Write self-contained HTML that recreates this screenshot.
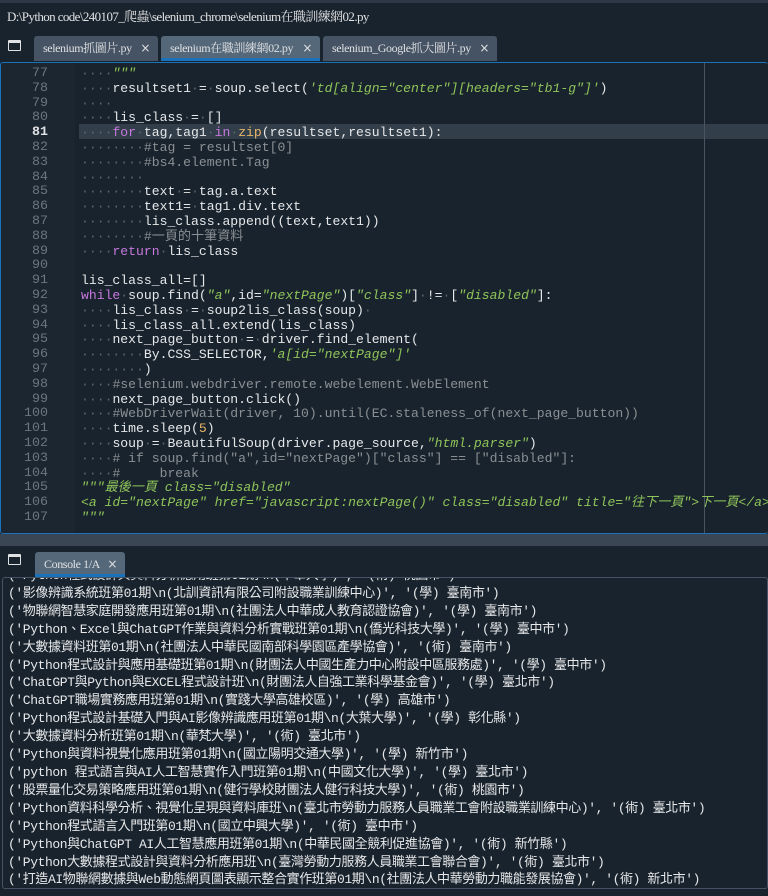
<!DOCTYPE html>
<html><head><meta charset="utf-8"><style>
*{margin:0;padding:0;box-sizing:border-box}
body{width:768px;height:896px;background:#19232d;overflow:hidden;position:relative;font-family:"Liberation Mono","Noto Sans CJK TC",monospace}
.title{position:absolute;left:0;top:0;width:768px;height:31px;background:#19232d;border-top:3px solid #2c3845;color:#e0e1e3;font-family:"Liberation Serif","Noto Serif CJK SC",serif;font-size:13px;line-height:28px;padding-left:7px;letter-spacing:-0.6px}
.tabs{position:absolute;top:36px;left:0;width:768px;height:25px}
.tab{position:absolute;top:0;height:25px;background:#455364;color:#e0e1e3;font-family:"Liberation Serif","Noto Serif CJK SC",serif;font-size:12px;line-height:24px;padding-left:9px;border-radius:3px 3px 0 0;letter-spacing:-0.4px}
.tab.act{background:#54687a;border-bottom:3px solid #1a72bb}
.tab b{position:absolute;right:8px;top:0;font-weight:normal;font-family:"DejaVu Sans",sans-serif;font-size:12px}
.icon{position:absolute;width:13px;height:11px;border:1.5px solid #dfe1e2;border-top-width:3px;border-radius:1px}
.editor{position:absolute;left:0;top:62px;width:768px;height:472px;border:1.5px solid #1a72bb;border-right:none;border-radius:3px;background:#19232d;overflow:hidden}
.gut{position:absolute;left:0;top:0;width:74px;height:100%;background:#1c2631}
.vline{position:absolute;left:703px;top:0;width:1px;height:100%;background:#4a5460}
.cur{position:absolute;left:78px;top:61px;width:690px;height:15px;background:#323e49}
.ln{position:absolute;left:0;width:47px;text-align:right;color:#6b7680;font-size:13.33px;line-height:14.8px}
.code{position:absolute;left:80px;top:4px;white-space:pre;font-size:13.1px;line-height:14.8px;color:#e6e8ea}
.d{color:#5b6570}.k{color:#c678dd}.b{color:#e5b567}.s{color:#8fc45a;font-style:italic}.c{color:#8a8f94}.n{color:#e5b567}
.split{position:absolute;left:0;top:534px;width:768px;height:12px;background:#3a4653}
.console{position:absolute;left:2px;top:577px;width:766px;height:312px;border:1px solid #455364;border-radius:3px;overflow:hidden;background:#19232d}
.cl{position:absolute;left:5px;white-space:pre;font-size:13px;letter-spacing:-0.4px;line-height:17.9px;color:#e6e8ea}
</style></head><body>
<div class="title">D:\Python code\240107_爬蟲\selenium_chrome\selenium在職訓練網02.py</div>
<div class="icon" style="left:8px;top:40px"></div>
<div class="tabs">
<div class="tab" style="left:34px;width:124px">selenium抓圖片.py<b>×</b></div>
<div class="tab act" style="left:161px;width:159px">selenium在職訓練網02.py<b>×</b></div>
<div class="tab" style="left:323px;width:174px">selenium_Google抓大圖片.py<b>×</b></div>
</div>
<div class="editor">
<div class="gut"></div>
<div class="cur"></div>
<div class="vline"></div>
<div class="ln" style="top:4px">77<br>78<br>79<br>80<br><span style="color:#e0e1e3;font-weight:bold">81</span><br>82<br>83<br>84<br>85<br>86<br>87<br>88<br>89<br>90<br>91<br>92<br>93<br>94<br>95<br>96<br>97<br>98<br>99<br>100<br>101<br>102<br>103<br>104<br>105<br>106<br>107</div>
<div class="code"><span class="d">····</span><span class="s">"""</span>
<span class="d">····</span>resultset1<span class="d">·</span>=<span class="d">·</span>soup.select(<span class="s">'td[align="center"][headers="tb1-g"]'</span>)
<span class="d">····</span>
<span class="d">····</span>lis_class<span class="d">·</span>=<span class="d">·</span>[]
<span class="d">····</span><span class="k">for</span><span class="d">·</span>tag,tag1<span class="d">·</span><span class="k">in</span><span class="d">·</span><span class="b">zip</span>(resultset,resultset1):
<span class="d">········</span><span class="c">#tag = resultset[0]</span>
<span class="d">········</span><span class="c">#bs4.element.Tag</span>
<span class="d">········</span>
<span class="d">········</span>text<span class="d">·</span>=<span class="d">·</span>tag.a.text
<span class="d">········</span>text1=<span class="d">·</span>tag1.div.text
<span class="d">········</span>lis_class.append((text,text1))
<span class="d">········</span><span class="c">#一頁的十筆資料</span>
<span class="d">····</span><span class="k">return</span><span class="d">·</span>lis_class

lis_class_all=[]
<span class="k">while</span><span class="d">·</span>soup.find(<span class="s">"a"</span>,id=<span class="s">"nextPage"</span>)[<span class="s">"class"</span>]<span class="d">·</span>!=<span class="d">·</span>[<span class="s">"disabled"</span>]:
<span class="d">····</span>lis_class<span class="d">·</span>=<span class="d">·</span>soup2lis_class(soup)<span class="d">·</span>
<span class="d">····</span>lis_class_all.extend(lis_class)
<span class="d">····</span>next_page_button<span class="d">·</span>=<span class="d">·</span>driver.find_element(
<span class="d">········</span>By.CSS_SELECTOR,<span class="s">'a[id="nextPage"]'</span>
<span class="d">········</span>)
<span class="d">····</span><span class="c">#selenium.webdriver.remote.webelement.WebElement</span>
<span class="d">····</span>next_page_button.click()
<span class="d">····</span><span class="c">#WebDriverWait(driver, 10).until(EC.staleness_of(next_page_button))</span>
<span class="d">····</span>time.sleep(<span class="n">5</span>)
<span class="d">····</span>soup<span class="d">·</span>=<span class="d">·</span>BeautifulSoup(driver.page_source,<span class="s">"html.parser"</span>)
<span class="d">····</span><span class="c"># if soup.find("a",id="nextPage")["class"] == ["disabled"]:</span>
<span class="d">····</span><span class="c">#     break</span>
<span class="s">"""最後一頁 class="disabled"</span>
<span class="s">&lt;a id="nextPage" href="javascript:nextPage()" class="disabled" title="往下一頁"&gt;下一頁&lt;/a&gt;</span>
<span class="s">"""</span></div>
</div>
<div class="split"></div>
<div class="icon" style="left:8px;top:554px"></div>
<div class="tab act" style="left:35px;top:552px;width:90px;position:absolute">Console 1/A<b>×</b></div>
<div class="console">
<div class="cl" style="top:-11px">('Python程式設計與資料分析應用班第01期\n(中華大學)', '(術) 桃園市')
('影像辨識系統班第01期\n(北訓資訊有限公司附設職業訓練中心)', '(學) 臺南市')
('物聯網智慧家庭開發應用班第01期\n(社團法人中華成人教育認證協會)', '(學) 臺南市')
('Python、Excel與ChatGPT作業與資料分析實戰班第01期\n(僑光科技大學)', '(學) 臺中市')
('大數據資料班第01期\n(社團法人中華民國南部科學園區產學協會)', '(術) 臺南市')
('Python程式設計與應用基礎班第01期\n(財團法人中國生產力中心附設中區服務處)', '(學) 臺中市')
('ChatGPT與Python與EXCEL程式設計班\n(財團法人自強工業科學基金會)', '(學) 臺北市')
('ChatGPT職場實務應用班第01期\n(實踐大學高雄校區)', '(學) 高雄市')
('Python程式設計基礎入門與AI影像辨識應用班第01期\n(大葉大學)', '(學) 彰化縣')
('大數據資料分析班第01期\n(華梵大學)', '(術) 臺北市')
('Python與資料視覺化應用班第01期\n(國立陽明交通大學)', '(學) 新竹市')
('python 程式語言與AI人工智慧實作入門班第01期\n(中國文化大學)', '(學) 臺北市')
('股票量化交易策略應用班第01期\n(健行學校財團法人健行科技大學)', '(術) 桃園市')
('Python資料科學分析、視覺化呈現與資料庫班\n(臺北市勞動力服務人員職業工會附設職業訓練中心)', '(術) 臺北市')
('Python程式語言入門班第01期\n(國立中興大學)', '(術) 臺中市')
('Python與ChatGPT AI人工智慧應用班第01期\n(中華民國全競利促進協會)', '(術) 新竹縣')
('Python大數據程式設計與資料分析應用班\n(臺灣勞動力服務人員職業工會聯合會)', '(術) 臺北市')
('打造AI物聯網數據與Web動態網頁圖表顯示整合實作班第01期\n(社團法人中華勞動力職能發展協會)', '(術) 新北市')</div>
</div>
</body></html>
